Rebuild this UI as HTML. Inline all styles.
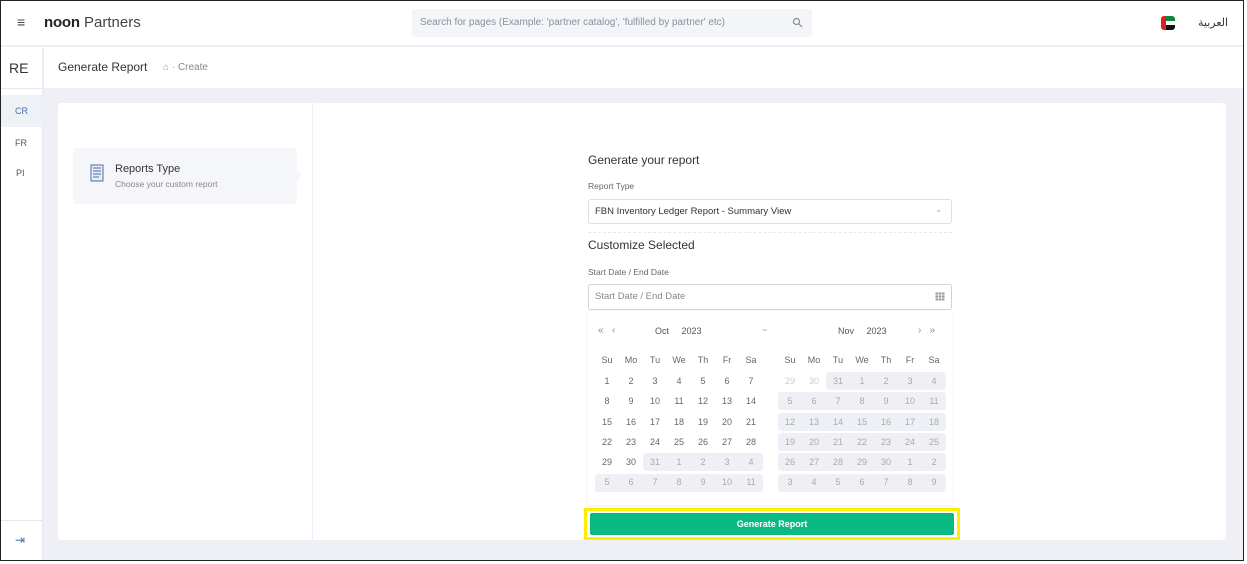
<!DOCTYPE html>
<html><head><meta charset="utf-8"><style>
*{box-sizing:border-box;margin:0;padding:0}
body{width:1247px;height:564px;background:#fff;font-family:"Liberation Sans","Noto Sans CJK SC",sans-serif;position:relative;overflow:hidden;color:#3b4252}
.a{position:absolute}
.frame{left:0;top:0;width:1244px;height:561px;border:1px solid #222;background:#eff0f5}
.t{position:absolute;white-space:nowrap}
.cal div{position:absolute;width:24px;text-align:center;font-size:9px;color:#666}
.g{color:#aaa!important}
.rg{position:absolute;background:#eef0f5;border-radius:3px}
</style></head><body>
<div class="a frame"></div>
<div class="a" style="left:1px;top:1px;width:1242px;height:45px;background:#fff;border-bottom:1px solid #eceef2"></div>
<div class="t" style="left:17px;top:14px;font-size:14px;color:#444">&#8801;</div>
<div class="t" style="left:44px;top:14px;font-size:15px;color:#222"><b style="letter-spacing:-0.2px">noon</b> <span style="color:#444">Partners</span></div>
<div class="a" style="left:412px;top:9px;width:400px;height:28px;background:#f4f5f9;border-radius:4px"></div>
<div class="t" style="left:420px;top:17px;font-size:10px;color:#8a8f9c">Search for pages (Example: 'partner catalog', 'fulfilled by partner' etc)</div>
<svg class="a" style="left:792px;top:17px" width="11" height="11" viewBox="0 0 11 11"><circle cx="4.5" cy="4.5" r="3" fill="none" stroke="#888" stroke-width="1.2"/><path d="M7 7l3 3" stroke="#888" stroke-width="1.2"/></svg>
<div class="a" style="left:1161px;top:16px;width:14px;height:14px;border-radius:3px;overflow:hidden">
<div style="height:4.6px;background:#0a8a3a;margin-left:4px"></div><div style="height:4.6px;background:#fff;margin-left:4px"></div><div style="height:4.8px;background:#111;margin-left:4px"></div>
<div style="position:absolute;left:0;top:0;width:4.5px;height:14px;background:#e31b23"></div></div>
<div class="t" style="left:1198px;top:16px;font-size:11px;color:#333;font-family:'Liberation Sans','DejaVu Sans',sans-serif">العربية</div>
<div class="a" style="left:1px;top:47px;width:42px;height:513px;background:#fff;border-right:1px solid #e6e8ee"></div>
<div class="t" style="left:9px;top:60px;font-size:14px;color:#333">RE</div>
<div class="a" style="left:1px;top:88px;width:42px;height:1px;background:#e6e8ee"></div>
<div class="a" style="left:1px;top:95px;width:42px;height:32px;background:#eef1f6"></div>
<div class="t" style="left:15px;top:106px;font-size:9px;color:#4a6fa5">CR</div>
<div class="t" style="left:15px;top:138px;font-size:9px;color:#555">FR</div>
<div class="t" style="left:16px;top:168px;font-size:9px;color:#555">PI</div>
<div class="a" style="left:1px;top:520px;width:42px;height:1px;background:#e6e8ee"></div>
<div class="t" style="left:15px;top:533px;font-size:12px;color:#4a6fa5">&#8677;</div>
<div class="a" style="left:44px;top:47px;width:1199px;height:41px;background:#fff"></div>
<div class="t" style="left:58px;top:60px;font-size:12px;color:#333">Generate Report</div>
<div class="t" style="left:163px;top:62px;font-size:10px;color:#999">&#8962; · <span style="color:#888">Create</span></div>
<div class="a" style="left:58px;top:103px;width:1168px;height:437px;background:#fff;border-radius:3px"></div>
<div class="a" style="left:312px;top:103px;width:1px;height:437px;background:#eceef2"></div>
<div class="a" style="left:73px;top:148px;width:224px;height:56px;background:#f5f6f9;border-radius:4px"></div>
<div class="a" style="left:296px;top:169px;width:0;height:0;border-top:6px solid transparent;border-bottom:6px solid transparent;border-left:6px solid #f5f6f9"></div>
<svg class="a" style="left:90px;top:164px" width="15" height="19" viewBox="0 0 15 19"><rect x="1" y="1" width="12" height="16" fill="#e8ecf4" stroke="#4a6fa5" stroke-width="1"/><path d="M3 4h8M3 7h8M3 10h8M3 13h6" stroke="#4a6fa5" stroke-width="1"/></svg>
<div class="t" style="left:115px;top:163px;font-size:11px;color:#333">Reports Type</div>
<div class="t" style="left:115px;top:179px;font-size:8.5px;color:#888">Choose your custom report</div>
<div class="t" style="left:588px;top:153px;font-size:12px;color:#333">Generate your report</div>
<div class="t" style="left:588px;top:181px;font-size:8.5px;color:#666">Report Type</div>
<div class="a" style="left:588px;top:199px;width:364px;height:25px;border:1px solid #dcdfe6;border-radius:3px"></div>
<div class="t" style="left:595px;top:206px;font-size:9.5px;color:#333">FBN Inventory Ledger Report - Summary View</div>
<div class="t" style="left:935px;top:204px;font-size:9px;color:#aaa">&#8964;</div>
<div class="a" style="left:588px;top:232px;width:364px;border-top:1px dashed #e6e8ee"></div>
<div class="t" style="left:588px;top:238px;font-size:12px;color:#333">Customize Selected</div>
<div class="t" style="left:588px;top:267px;font-size:8.5px;color:#666">Start Date / End Date</div>
<div class="a" style="left:588px;top:284px;width:364px;height:26px;border:1px solid #cfd3da;border-radius:3px"></div>
<div class="t" style="left:595px;top:291px;font-size:9.5px;color:#888">Start Date / End Date</div>
<svg class="a" style="left:935px;top:292px" width="10" height="9" viewBox="0 0 10 9"><rect x="0.5" y="0.5" width="9" height="8" fill="#999"/><path d="M0 3h10M0 6h10M3.3 1v8M6.6 1v8" stroke="#fff" stroke-width="0.7"/></svg>
<div class="a" style="left:588px;top:311px;width:364px;height:194px;background:#fff;box-shadow:0 1px 3px rgba(0,0,0,0.08)"></div>
<div class="t" style="left:598px;top:325px;font-size:10px;color:#888">«&nbsp;&nbsp;&nbsp;‹</div>
<div class="t" style="left:655px;top:326px;font-size:9px;color:#555">Oct&nbsp;&nbsp;&nbsp;&nbsp;&nbsp;2023</div>
<div class="t" style="left:762px;top:325px;font-size:9px;color:#888">~</div>
<div class="t" style="left:838px;top:326px;font-size:9px;color:#555">Nov&nbsp;&nbsp;&nbsp;&nbsp;&nbsp;2023</div>
<div class="t" style="left:918px;top:325px;font-size:10px;color:#888">›&nbsp;&nbsp;&nbsp;»</div>
<div class="rg" style="left:643px;top:453px;width:120px;height:18px"></div>
<div class="rg" style="left:595px;top:474px;width:168px;height:18px"></div>
<div class="rg" style="left:826px;top:372px;width:120px;height:18px"></div>
<div class="rg" style="left:778px;top:392px;width:168px;height:18px"></div>
<div class="rg" style="left:778px;top:413px;width:168px;height:18px"></div>
<div class="rg" style="left:778px;top:433px;width:168px;height:18px"></div>
<div class="rg" style="left:778px;top:453px;width:168px;height:18px"></div>
<div class="rg" style="left:778px;top:474px;width:168px;height:18px"></div>
<div class="cal a" style="left:595px;top:355px">
<div style="left:0;top:0">Su</div><div style="left:24px;top:0">Mo</div><div style="left:48px;top:0">Tu</div><div style="left:72px;top:0">We</div><div style="left:96px;top:0">Th</div><div style="left:120px;top:0">Fr</div><div style="left:144px;top:0">Sa</div>
<div style="left:0;top:21px">1</div><div style="left:24px;top:21px">2</div><div style="left:48px;top:21px">3</div><div style="left:72px;top:21px">4</div><div style="left:96px;top:21px">5</div><div style="left:120px;top:21px">6</div><div style="left:144px;top:21px">7</div>
<div style="left:0;top:41px">8</div><div style="left:24px;top:41px">9</div><div style="left:48px;top:41px">10</div><div style="left:72px;top:41px">11</div><div style="left:96px;top:41px">12</div><div style="left:120px;top:41px">13</div><div style="left:144px;top:41px">14</div>
<div style="left:0;top:62px">15</div><div style="left:24px;top:62px">16</div><div style="left:48px;top:62px">17</div><div style="left:72px;top:62px">18</div><div style="left:96px;top:62px">19</div><div style="left:120px;top:62px">20</div><div style="left:144px;top:62px">21</div>
<div style="left:0;top:82px">22</div><div style="left:24px;top:82px">23</div><div style="left:48px;top:82px">24</div><div style="left:72px;top:82px">25</div><div style="left:96px;top:82px">26</div><div style="left:120px;top:82px">27</div><div style="left:144px;top:82px">28</div>
<div style="left:0;top:102px">29</div><div style="left:24px;top:102px">30</div><div class="g" style="left:48px;top:102px">31</div><div class="g" style="left:72px;top:102px">1</div><div class="g" style="left:96px;top:102px">2</div><div class="g" style="left:120px;top:102px">3</div><div class="g" style="left:144px;top:102px">4</div>
<div class="g" style="left:0;top:122px">5</div><div class="g" style="left:24px;top:122px">6</div><div class="g" style="left:48px;top:122px">7</div><div class="g" style="left:72px;top:122px">8</div><div class="g" style="left:96px;top:122px">9</div><div class="g" style="left:120px;top:122px">10</div><div class="g" style="left:144px;top:122px">11</div>
</div>
<div class="cal a" style="left:778px;top:355px">
<div style="left:0;top:0">Su</div><div style="left:24px;top:0">Mo</div><div style="left:48px;top:0">Tu</div><div style="left:72px;top:0">We</div><div style="left:96px;top:0">Th</div><div style="left:120px;top:0">Fr</div><div style="left:144px;top:0">Sa</div>
<div class="g" style="left:0;top:21px;color:#ccc!important">29</div><div class="g" style="left:24px;top:21px;color:#ccc!important">30</div><div class="g" style="left:48px;top:21px">31</div><div class="g" style="left:72px;top:21px">1</div><div class="g" style="left:96px;top:21px">2</div><div class="g" style="left:120px;top:21px">3</div><div class="g" style="left:144px;top:21px">4</div>
<div class="g" style="left:0;top:41px">5</div><div class="g" style="left:24px;top:41px">6</div><div class="g" style="left:48px;top:41px">7</div><div class="g" style="left:72px;top:41px">8</div><div class="g" style="left:96px;top:41px">9</div><div class="g" style="left:120px;top:41px">10</div><div class="g" style="left:144px;top:41px">11</div>
<div class="g" style="left:0;top:62px">12</div><div class="g" style="left:24px;top:62px">13</div><div class="g" style="left:48px;top:62px">14</div><div class="g" style="left:72px;top:62px">15</div><div class="g" style="left:96px;top:62px">16</div><div class="g" style="left:120px;top:62px">17</div><div class="g" style="left:144px;top:62px">18</div>
<div class="g" style="left:0;top:82px">19</div><div class="g" style="left:24px;top:82px">20</div><div class="g" style="left:48px;top:82px">21</div><div class="g" style="left:72px;top:82px">22</div><div class="g" style="left:96px;top:82px">23</div><div class="g" style="left:120px;top:82px">24</div><div class="g" style="left:144px;top:82px">25</div>
<div class="g" style="left:0;top:102px">26</div><div class="g" style="left:24px;top:102px">27</div><div class="g" style="left:48px;top:102px">28</div><div class="g" style="left:72px;top:102px">29</div><div class="g" style="left:96px;top:102px">30</div><div class="g" style="left:120px;top:102px">1</div><div class="g" style="left:144px;top:102px">2</div>
<div class="g" style="left:0;top:122px">3</div><div class="g" style="left:24px;top:122px">4</div><div class="g" style="left:48px;top:122px">5</div><div class="g" style="left:72px;top:122px">6</div><div class="g" style="left:96px;top:122px">7</div><div class="g" style="left:120px;top:122px">8</div><div class="g" style="left:144px;top:122px">9</div>
</div>
<div class="a" style="left:584px;top:508px;width:376px;height:32px;border:3px solid #ffee00"></div>
<div class="a" style="left:590px;top:513px;width:364px;height:22px;background:#0bba83;border-radius:2px"></div>
<div class="t" style="left:590px;top:519px;width:364px;text-align:center;font-size:9px;color:#fff;font-weight:bold">Generate Report</div>
</body></html>
